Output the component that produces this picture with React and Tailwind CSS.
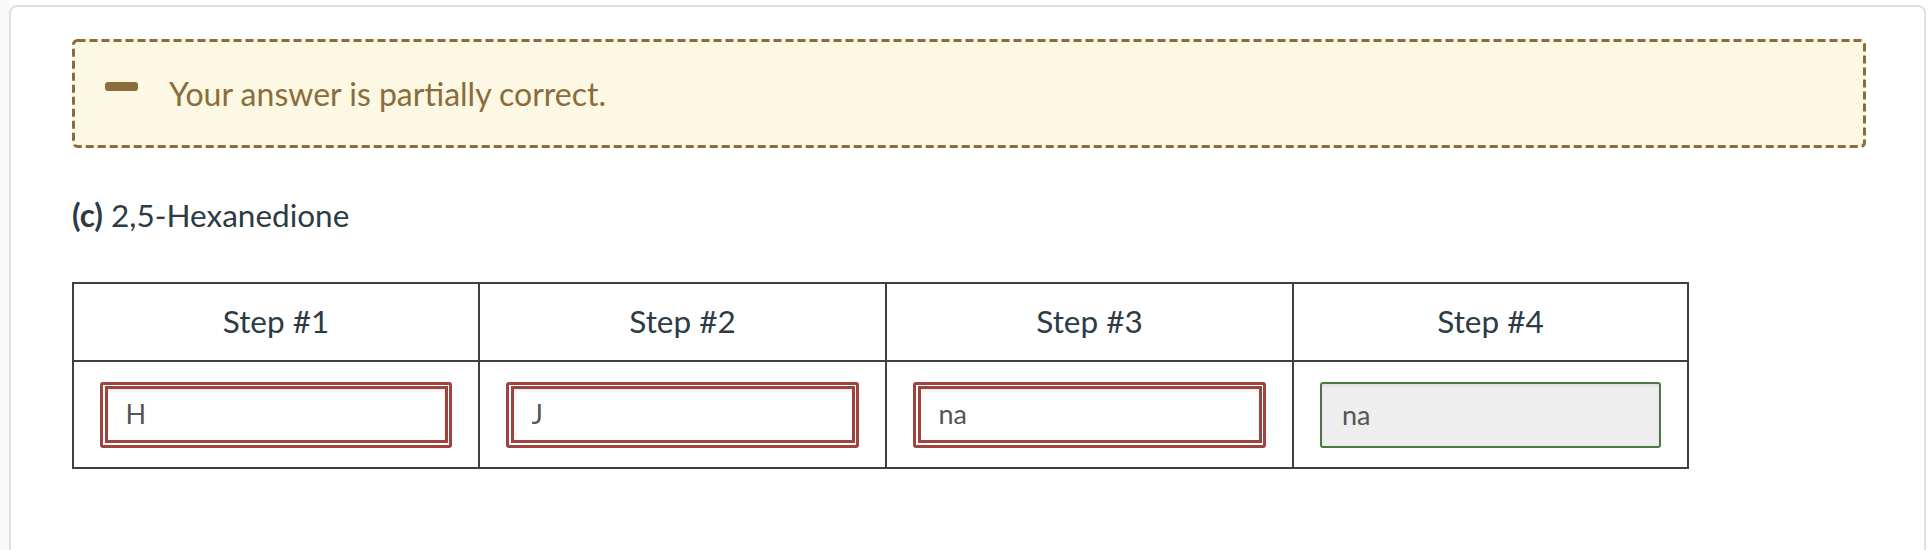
import React from 'react';

const steps = [
    { label: 'Step #1', value: 'H', correct: false },
    { label: 'Step #2', value: 'J', correct: false },
    { label: 'Step #3', value: 'na', correct: false },
    { label: 'Step #4', value: 'na', correct: true },
];

function AnswerField({ value, correct }) {
    if (correct) {
        return (
            <input
                readOnly
                value={value}
                className="w-full h-[66px] border-2 border-[#4b7a3f] rounded-[3px] bg-[#eeeeee] px-[20px] text-[27px] text-[#555555] outline-none shadow-[inset_0_2px_3px_rgba(0,0,0,0.06)]"
            />
        );
    }
    // incorrect answers get a double red frame
    return (
        <div className="w-full h-[66px] border-[3px] border-[#9f433e] rounded-[3px] bg-white p-[1.5px] flex">
            <input
                readOnly
                value={value}
                className="flex-1 min-w-0 border-[3px] border-[#9f433e] bg-white px-[18px] text-[27px] text-[#555555] outline-none shadow-[inset_0_2px_3px_rgba(0,0,0,0.08)]"
            />
        </div>
    );
}

export default function App() {
    return (
        <div className="w-[1928px] h-[550px] overflow-hidden bg-white flex font-['Lato','Liberation_Sans',sans-serif]">
            <div className="w-[9px] shrink-0 bg-[#f8f8f8]" />

            <div className="mt-[5px] w-[1917px] shrink-0 border-2 border-b-0 border-[#e0e0e0] rounded-t-[8px] pl-[61px] pt-[32px]">
                {/* feedback banner, dashed frame drawn on top */}
                <div className="relative w-[1794px] h-[109px] rounded-[5px] bg-[#fcf8e3] flex items-center pl-[33px]">
                    <svg className="absolute inset-0 pointer-events-none" width="1794" height="109">
                        <rect
                            x="1.5"
                            y="1.5"
                            width="1791"
                            height="106"
                            rx="4"
                            fill="none"
                            stroke="#8a6d3b"
                            strokeWidth="3"
                            strokeDasharray="8 4"
                        />
                    </svg>
                    <div className="w-[33px] h-[9px] rounded-[3px] bg-[#8a6d3b] mb-[14px]" />
                    <p className="ml-[31px] text-[32px] leading-[40px] text-[#8a6d3b]">
                        Your answer is partially correct.
                    </p>
                </div>

                <p className="mt-[47px] text-[31.5px] leading-[40px] text-[#2d3b45]">
                    <span className="font-bold">(c)</span> 2,5-Hexanedione
                </p>

                {/* steps table */}
                <div className="mt-[47px] w-[1617px] border-2 border-[#3f3f3f] grid grid-cols-[406px_407px_407px_393px] text-[#2d3b45]">
                    {steps.map((s, i) => (
                        <div
                            key={s.label}
                            className={`h-[78px] border-b-2 border-[#3f3f3f] flex items-center justify-center text-[31.5px] ${i < 3 ? 'border-r-2' : ''}`}
                        >
                            {s.label}
                        </div>
                    ))}
                    {steps.map((s, i) => (
                        <div
                            key={s.label + '-a'}
                            className={`h-[105px] border-[#3f3f3f] flex items-center px-[26px] ${i < 3 ? 'border-r-2' : ''}`}
                        >
                            <AnswerField value={s.value} correct={s.correct} />
                        </div>
                    ))}
                </div>
            </div>
        </div>
    );
}
